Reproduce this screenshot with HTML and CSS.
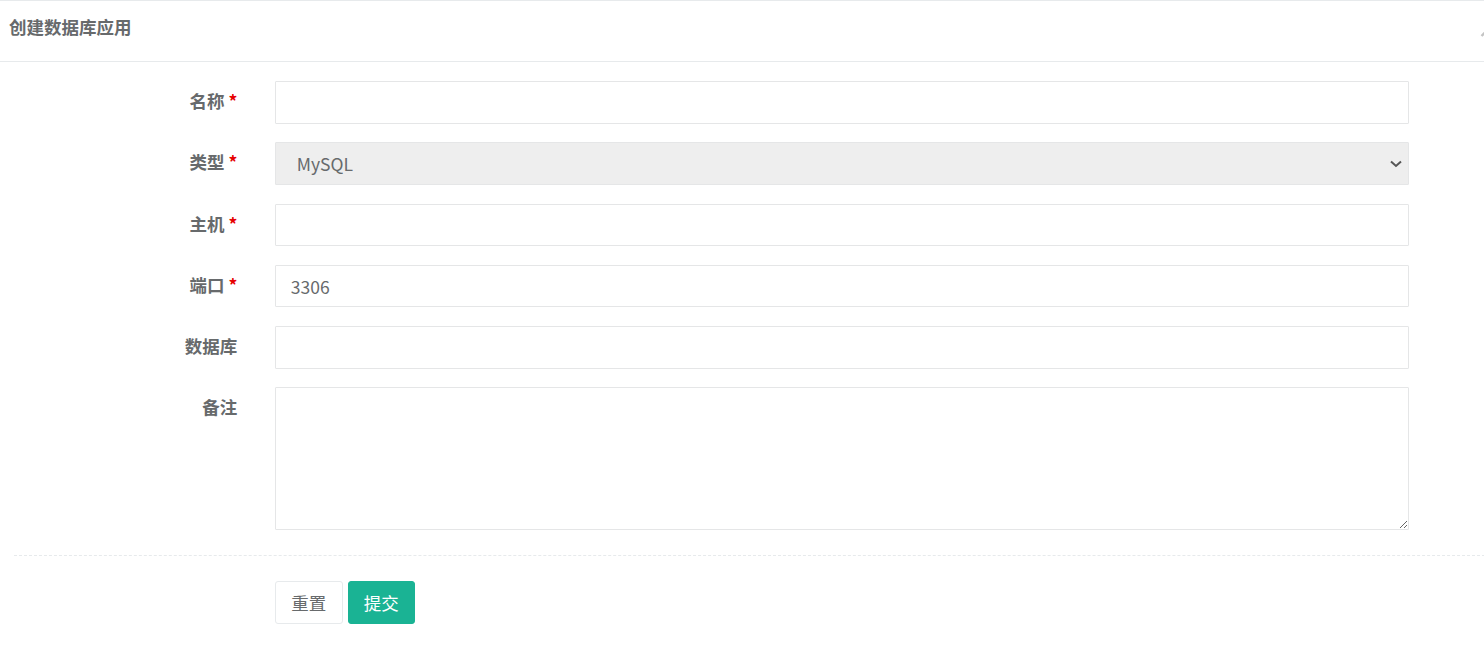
FILE: index.html
```html
<!DOCTYPE html>
<html lang="zh-CN">
<head>
<meta charset="utf-8">
<title>创建数据库应用</title>
<link rel="stylesheet" href="styles.css">
</head>
<body>
<div class="ibox">
  <div class="ibox-title">
    <h5>创建数据库应用</h5>
    <span class="tools">
      <svg width="14" height="10" viewBox="0 0 14 10"><path d="M1.5 8 L7 2.5 L12.5 8" fill="none" stroke="#c4c4c4" stroke-width="2.4"/></svg>
    </span>
  </div>
  <form class="ibox-content">
    <div class="row">
      <label class="lbl">名称 <span class="req">*</span></label>
      <div class="field"><input class="ctl" type="text"></div>
    </div>
    <div class="row">
      <label class="lbl">类型 <span class="req">*</span></label>
      <div class="field">
        <select class="ctl sel"><option>MySQL</option></select>
      </div>
    </div>
    <div class="row">
      <label class="lbl">主机 <span class="req">*</span></label>
      <div class="field"><input class="ctl" type="text"></div>
    </div>
    <div class="row">
      <label class="lbl">端口 <span class="req">*</span></label>
      <div class="field"><input class="ctl" type="text" value="3306"></div>
    </div>
    <div class="row">
      <label class="lbl">数据库</label>
      <div class="field"><input class="ctl" type="text"></div>
    </div>
    <div class="row">
      <label class="lbl">备注</label>
      <div class="field"><textarea class="ctl area"></textarea></div>
    </div>
    <div class="divider"></div>
    <div class="row">
      <div class="lbl"></div>
      <div class="field buttons">
        <button type="button" class="btn btn-white">重置</button>
        <button type="button" class="btn btn-primary">提交</button>
      </div>
    </div>
  </form>
</div>
</body>
</html>
```
FILE: styles.css
```css
html, body {
  margin: 0;
  padding: 0;
  background: #fff;
  overflow: hidden;
}
body {
  font-family: "Noto Sans CJK SC", "Open Sans", sans-serif;
  color: #676a6c;
  font-size: 17.5px;
}
.ibox {
  width: 1500px;
  border-top: 1px solid #e7eaec;
}
.ibox-title {
  box-sizing: border-box;
  border-bottom: 1px solid #e7eaec;
  display: flex;
  align-items: flex-start;
  justify-content: space-between;
  padding: 17px 0 0 9px;
  height: 61px;
}
.ibox-title h5 {
  margin: 0;
  font-size: 17.5px;
  font-weight: 700;
  color: #676a6c;
  line-height: 17.5px;
}
.tools {
  display: flex;
  margin-right: 6px;
  padding-top: 10px;
}
.ibox-content {
  padding-top: 19px;
  display: block;
  margin: 0;
}
.row {
  display: grid;
  grid-template-columns: 256px 1172px;
  margin-bottom: 18.75px;
}
.lbl {
  text-align: right;
  padding-right: 18.75px;
  padding-top: 8px;
  font-weight: 700;
  line-height: 24px;
  box-sizing: border-box;
}
.req {
  color: #e60000;
}
.field {
  padding-left: 18.75px;
  padding-right: 18.75px;
}
.ctl {
  display: block;
  width: 100%;
  box-sizing: border-box;
  height: 42.5px;
  border: 1px solid #e5e6e7;
  border-radius: 1px;
  background: #fff;
  padding: 0 15px;
  font-family: "Noto Sans CJK SC", "Open Sans", sans-serif;
  font-size: 17.5px;
  color: #676a6c;
  outline: none;
  margin: 0;
}
.sel {
  appearance: none;
  -webkit-appearance: none;
  background-color: #eeeeee;
  padding-left: 21px;
  background-image: url("data:image/svg+xml,%3Csvg xmlns='http://www.w3.org/2000/svg' width='12' height='8' viewBox='0 0 12 8'%3E%3Cpath d='M1 1.5 L6 6 L11 1.5' fill='none' stroke='%23555' stroke-width='2'/%3E%3C/svg%3E");
  background-repeat: no-repeat;
  background-position: right 6px center;
}
.area {
  height: 143px;
  padding: 8px 15px;
  resize: vertical;
}
.divider {
  margin: 25px 0 25px 14px;
  border-top: 1px dashed #e7eaec;
}
.buttons {
  display: flex;
  gap: 5px;
}
.btn {
  height: 43px;
  box-sizing: border-box;
  padding: 0 15px;
  font-family: "Noto Sans CJK SC", "Open Sans", sans-serif;
  font-size: 17.5px;
  border-radius: 3px;
  cursor: pointer;
  line-height: 1;
}
.btn-white {
  background: #fff;
  border: 1px solid #e7eaec;
  color: #676a6c;
  width: 68px;
}
.btn-primary {
  background: #1ab394;
  border: 1px solid #1ab394;
  color: #fff;
  width: 67px;
}
```
